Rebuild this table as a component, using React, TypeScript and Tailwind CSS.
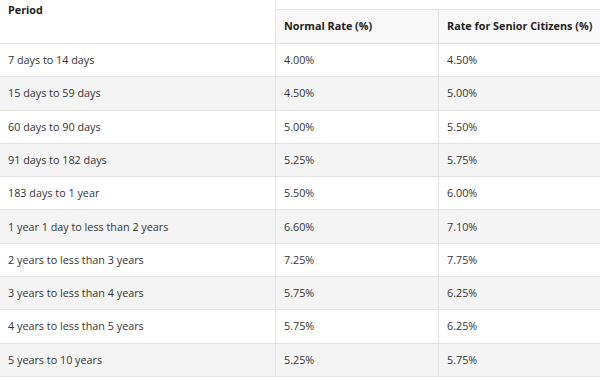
import React from "react";

const rows: [string, string, string][] = [
  ["7 days to 14 days", "4.00%", "4.50%"],
  ["15 days to 59 days", "4.50%", "5.00%"],
  ["60 days to 90 days", "5.00%", "5.50%"],
  ["91 days to 182 days", "5.25%", "5.75%"],
  ["183 days to 1 year", "5.50%", "6.00%"],
  ["1 year 1 day to less than 2 years", "6.60%", "7.10%"],
  ["2 years to less than 3 years", "7.25%", "7.75%"],
  ["3 years to less than 4 years", "5.75%", "6.25%"],
  ["4 years to less than 5 years", "5.75%", "6.25%"],
  ["5 years to 10 years", "5.25%", "5.75%"],
];

export default function App() {
  return (
    <div
      className="w-[600px] h-[378px] bg-white text-[10.8px] text-[#333] overflow-hidden"
      style={{ fontFamily: '"Open Sans", "Liberation Sans", sans-serif' }}
    >
      <div className="flex h-[44px]">
        <div className="w-[276px] border-r border-b border-[#e3e3e3] pl-2 pt-[2px] font-bold text-[#222]">
          Period
        </div>
        <div className="flex-1 flex flex-col">
          <div className="h-[10px] border-b border-[#e3e3e3]" />
          <div className="flex flex-1 bg-[#f8f8f8] border-b border-[#e3e3e3] font-bold text-[#222]">
            <div className="w-[163px] border-r border-[#e3e3e3] pl-2 flex items-center">
              Normal Rate (%)
            </div>
            <div className="flex-1 pl-2 flex items-center">Rate for Senior Citizens (%)</div>
          </div>
        </div>
      </div>
      {rows.map((r, i) => (
        <div
          key={i}
          className={`flex h-[33.3px] border-b border-[#e3e3e3] ${i % 2 === 1 ? "bg-[#f4f4f4]" : "bg-white"}`}
        >
          <div className="w-[276px] border-r border-[#e3e3e3] pl-2 flex items-center">{r[0]}</div>
          <div className="w-[163px] border-r border-[#e3e3e3] pl-2 flex items-center">{r[1]}</div>
          <div className="flex-1 pl-2 flex items-center">{r[2]}</div>
        </div>
      ))}
    </div>
  );
}
